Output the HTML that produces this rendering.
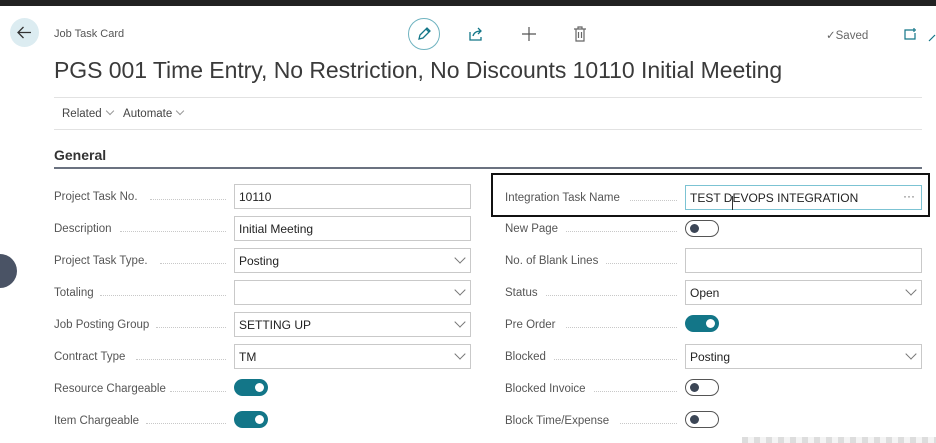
<!DOCTYPE html>
<html><head><style>
*{margin:0;padding:0;box-sizing:border-box}
body{width:936px;height:443px;overflow:hidden;background:#fff;font-family:"Liberation Sans",sans-serif;position:relative;color:#333}
.a{position:absolute}
.lbl{position:absolute;font-size:11.5px;color:#555;white-space:nowrap}
.dots{position:absolute;height:1px;border-top:1px dotted #c8c8c8}
.fld{position:absolute;height:25px;border:1px solid #c9c9c9;font-size:12px;color:#222;padding:5px 4px;background:#fff}
.chev{position:absolute;right:6px;top:5px;width:8px;height:8px;border-right:1px solid #777;border-bottom:1px solid #777;transform:rotate(45deg)}
.ton{position:absolute;width:34px;height:17px;border-radius:9px;background:#137688}
.ton::after{content:"";position:absolute;right:4px;top:4px;width:9px;height:9px;border-radius:50%;background:#fff}
.tof{position:absolute;width:34px;height:17px;border-radius:9px;border:1px solid #555;background:#fff}
.tof::after{content:"";position:absolute;left:4px;top:3px;width:9px;height:9px;border-radius:50%;background:#3c4656}
.sc{display:inline-block;width:6px;height:6px;border-right:1px solid #999;border-bottom:1px solid #999;transform:rotate(45deg);margin:0 4px 3px 5px}
</style></head><body>
<div class="a" style="left:0;top:0;width:936px;height:6px;background:#222"></div>
<div class="a" style="left:10px;top:18px;width:29px;height:29px;border-radius:50%;background:#dcecf1"></div>
<svg class="a" style="left:16px;top:24px" width="17" height="17" viewBox="0 0 17 17"><path d="M15 8.5H2M7.5 3L2 8.5 7.5 14" stroke="#333" stroke-width="1.3" fill="none"/></svg>
<div class="a" style="left:54px;top:28px;font-size:11px;color:#555">Job Task Card</div>
<div class="a" style="left:408px;top:18px;width:32px;height:32px;border-radius:50%;border:1.5px solid #6fb3c0"></div>
<svg class="a" style="left:416px;top:26px" width="16" height="16" viewBox="0 0 16 16"><path d="M3 13l1-4 7-7 3 3-7 7z M10 3l3 3" stroke="#137688" stroke-width="1.3" fill="none"/></svg>
<svg class="a" style="left:468px;top:26px" width="16" height="16" viewBox="0 0 16 16"><path d="M2 6v8h11v-3M5 10c1-4 4-5 8-5M10 2l3 3-3 3" stroke="#137688" stroke-width="1.3" fill="none"/></svg>
<svg class="a" style="left:521px;top:26px" width="16" height="16" viewBox="0 0 16 16"><path d="M8 1v14M1 8h14" stroke="#555" stroke-width="1.2"/></svg>
<svg class="a" style="left:573px;top:26px" width="14" height="16" viewBox="0 0 14 16"><path d="M1 3h12M5 3V1h4v2M3 3v12h8V3M5.5 6v6M8.5 6v6" stroke="#666" stroke-width="1.2" fill="none"/></svg>
<div class="a" style="left:826px;top:28px;font-size:11.5px;color:#666">✓Saved</div>
<svg class="a" style="left:903px;top:27px" width="14" height="14" viewBox="0 0 14 14"><path d="M9 3H2v9h10V6M11 1v4M9 3h4" stroke="#137688" stroke-width="1.2" fill="none"/></svg>
<svg class="a" style="left:928px;top:32px" width="8" height="10"><path d="M1 9l6-6" stroke="#137688" stroke-width="1.2"/></svg>
<div class="a" style="left:54px;top:57px;font-size:23px;color:#3a3a3a;white-space:nowrap;letter-spacing:-0.05px">PGS 001 Time Entry, No Restriction, No Discounts 10110 Initial Meeting</div>
<div class="a" style="left:54px;top:97px;width:868px;height:1px;background:#e2e2e2"></div>
<div class="a" style="left:62px;top:107px;font-size:11.5px;line-height:14px;color:#444">Related<span class="sc"></span>&nbsp;&nbsp;Automate<span class="sc"></span></div>
<div class="a" style="left:54px;top:129px;width:868px;height:1px;background:#e2e2e2"></div>
<div class="a" style="left:54px;top:147px;font-size:14px;font-weight:bold;color:#333">General</div>
<div class="a" style="left:54px;top:167px;width:868px;height:2px;background:#6b7280"></div>
<div class="a" style="left:0;top:254px;width:17px;height:34px;border-radius:0 17px 17px 0;background:#4a5365"></div>

<div class="lbl" style="left:54px;top:191px">Project Task No.</div><div class="dots" style="left:150px;width:76px;top:199px"></div>
<div class="fld" style="left:234px;top:184px;width:237px">10110</div>
<div class="lbl" style="left:54px;top:223px">Description</div><div class="dots" style="left:120px;width:106px;top:231px"></div>
<div class="fld" style="left:234px;top:216px;width:237px">Initial Meeting</div>
<div class="lbl" style="left:54px;top:255px">Project Task Type.</div><div class="dots" style="left:160px;width:66px;top:263px"></div>
<div class="fld" style="left:234px;top:248px;width:237px">Posting<span class="chev"></span></div>
<div class="lbl" style="left:54px;top:287px">Totaling</div><div class="dots" style="left:100px;width:126px;top:295px"></div>
<div class="fld" style="left:234px;top:280px;width:237px"><span class="chev"></span></div>
<div class="lbl" style="left:54px;top:319px">Job Posting Group</div><div class="dots" style="left:156px;width:70px;top:327px"></div>
<div class="fld" style="left:234px;top:312px;width:237px">SETTING UP<span class="chev"></span></div>
<div class="lbl" style="left:54px;top:351px">Contract Type</div><div class="dots" style="left:136px;width:90px;top:359px"></div>
<div class="fld" style="left:234px;top:344px;width:237px">TM<span class="chev"></span></div>
<div class="lbl" style="left:54px;top:383px">Resource Chargeable</div><div class="dots" style="left:170px;width:56px;top:391px"></div>
<div class="ton" style="left:234px;top:379px"></div>
<div class="lbl" style="left:54px;top:415px">Item Chargeable</div><div class="dots" style="left:146px;width:80px;top:423px"></div>
<div class="ton" style="left:234px;top:411px"></div>

<div class="a" style="left:491px;top:173px;width:439px;height:44px;border:2px solid #111"></div>
<div class="lbl" style="left:505px;top:192px">Integration Task Name</div><div class="dots" style="left:630px;width:47px;top:200px"></div>
<div class="fld" style="left:685px;top:185px;width:237px;border-color:#7cc3d3">TEST DEVOPS INTEGRATION<span style="position:absolute;right:6px;top:3px;color:#666">···</span></div>
<div class="a" style="left:732px;top:196px;width:1px;height:14px;background:#333"></div>
<div class="lbl" style="left:505px;top:223px">New Page</div><div class="dots" style="left:566px;width:111px;top:231px"></div>
<div class="tof" style="left:685px;top:220px"></div>
<div class="lbl" style="left:505px;top:255px">No. of Blank Lines</div><div class="dots" style="left:606px;width:71px;top:263px"></div>
<div class="fld" style="left:685px;top:248px;width:237px"></div>
<div class="lbl" style="left:505px;top:287px">Status</div><div class="dots" style="left:546px;width:131px;top:295px"></div>
<div class="fld" style="left:685px;top:280px;width:237px">Open<span class="chev"></span></div>
<div class="lbl" style="left:505px;top:319px">Pre Order</div><div class="dots" style="left:566px;width:111px;top:327px"></div>
<div class="ton" style="left:685px;top:315px"></div>
<div class="lbl" style="left:505px;top:351px">Blocked</div><div class="dots" style="left:554px;width:123px;top:359px"></div>
<div class="fld" style="left:685px;top:344px;width:237px">Posting<span class="chev"></span></div>
<div class="lbl" style="left:505px;top:383px">Blocked Invoice</div><div class="dots" style="left:594px;width:83px;top:391px"></div>
<div class="tof" style="left:685px;top:379px"></div>
<div class="lbl" style="left:505px;top:415px">Block Time/Expense</div><div class="dots" style="left:620px;width:57px;top:423px"></div>
<div class="tof" style="left:685px;top:411px"></div>
<div class="a" style="left:742px;top:437px;width:194px;height:6px;background:repeating-linear-gradient(90deg,#ddd 0 6px,#f4f4f4 6px 12px)"></div>
</body></html>
